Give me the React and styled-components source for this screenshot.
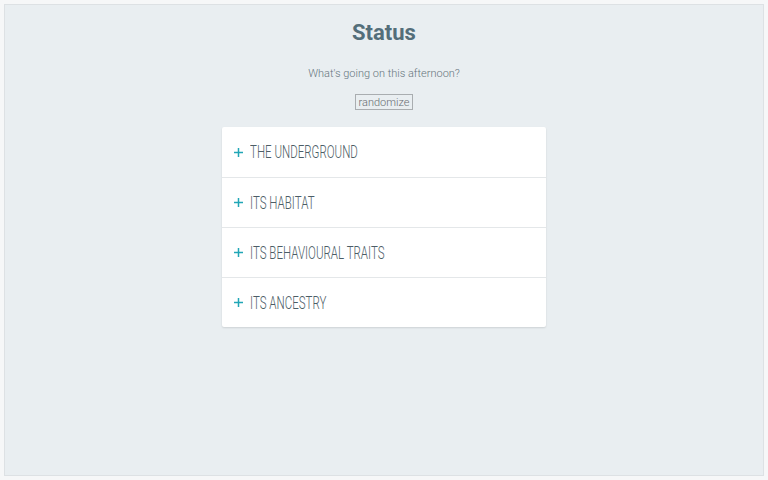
import styled, { createGlobalStyle } from 'styled-components';

const GlobalStyle = createGlobalStyle`
  html, body {
    margin: 0;
    padding: 0;
    background: #f6f7f8;
  }
  body {
    padding: 4px;
    font-family: Roboto, "Liberation Sans", sans-serif;
  }
`;

const Frame = styled.div`
  box-sizing: border-box;
  height: 472px;
  width: 760px;
  background: #e9eef1;
  border: 1px solid #dde1e4;
  display: flex;
  flex-direction: column;
  align-items: center;
  padding-top: 15px;
`;

const Title = styled.h1`
  margin: 0;
  font-size: 22px;
  font-weight: 700;
  line-height: 26px;
  color: #546e7a;
`;

const Subtitle = styled.p`
  margin: 21px 0 0;
  font-size: 11px;
  font-weight: 300;
  line-height: 14px;
  color: #66757d;
`;

const RandomButton = styled.button`
  margin-top: 13px;
  padding: 0 3px;
  height: 16px;
  font-family: Roboto, "Liberation Sans", sans-serif;
  font-size: 11px;
  font-weight: 300;
  line-height: 13px;
  color: #686d71;
  background: transparent;
  border: 1px solid #a9adb0;
  border-radius: 0;
`;

const Accordion = styled.div`
  margin-top: 17px;
  width: 324px;
  background: #fff;
  border-radius: 2px;
  box-shadow: 0 1px 2px rgba(0, 0, 0, 0.12);
`;

const Item = styled.div`
  display: flex;
  align-items: center;
  gap: 6px;
  height: 50px;
  padding: 0 12px 0 11px;
  box-sizing: border-box;
  border-top: ${({ $first }) => ($first ? 'none' : '1px solid #e4e7e9')};
  cursor: pointer;
`;

const PlusIcon = styled.svg`
  flex: none;
  width: 11px;
  height: 11px;
  stroke: #21a6b6;
  stroke-width: 1.5;
`;

const Label = styled.span`
  display: inline-block;
  font-family: Roboto, sans-serif;
  font-size: 18px;
  font-weight: 300;
  line-height: 22px;
  color: #4c5d66;
  text-transform: uppercase;
  white-space: nowrap;
  transform: scaleX(0.64);
  transform-origin: left center;
`;

const sections = ['The Underground', 'Its Habitat', 'Its Behavioural Traits', 'Its Ancestry'];

export default function App() {
  return (
    <>
      <GlobalStyle />
      <Frame>
        <Title>Status</Title>
        <Subtitle>What's going on this afternoon?</Subtitle>
        <RandomButton>randomize</RandomButton>
        <Accordion>
          {sections.map((name, i) => (
            <Item key={name} $first={i === 0}>
              <PlusIcon viewBox="0 0 11 11">
                <path d="M5.5 1v9M1 5.5h9" />
              </PlusIcon>
              <Label>{name}</Label>
            </Item>
          ))}
        </Accordion>
      </Frame>
    </>
  );
}
